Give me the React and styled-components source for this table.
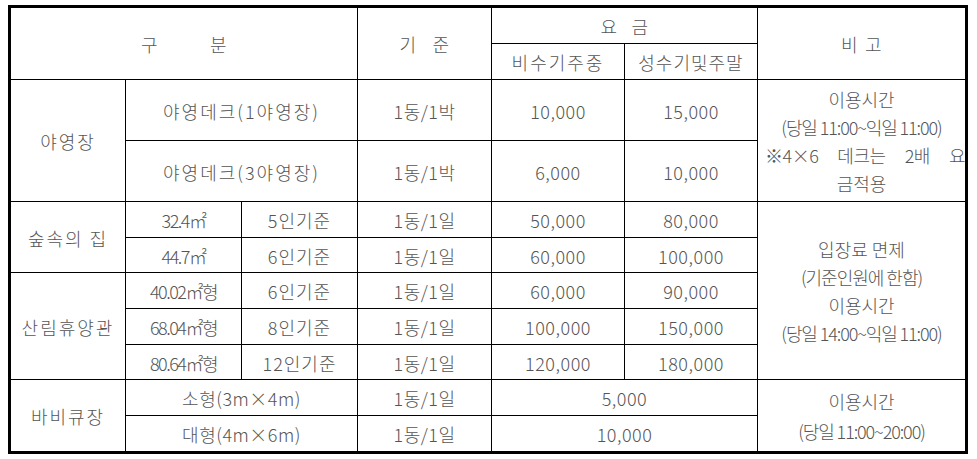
import React from "react";
import styled, { createGlobalStyle } from "styled-components";

const Global = createGlobalStyle`
  html, body { margin: 0; padding: 0; background: #fff; }
  body { font-family: "Noto Sans CJK KR", "Noto Sans", sans-serif; }
`;

const Page = styled.div`
  padding: 5px 0 0 8px;
`;

const Table = styled.div`
  display: grid;
  width: 954px;
  grid-template-columns: 114px 115px 115px 133px 132px 132px 207px;
  grid-template-rows: 35px 35px 60px 60px 35px 34px 35px 35px 34px 35px 35px;
  gap: 1px;
  background: #000;
  border: 3px solid #000;
`;

const Cell = styled.div`
  grid-column: ${(p) => p.$c};
  grid-row: ${(p) => p.$r};
  background: #fff;
  display: flex;
  align-items: center;
  justify-content: center;
  color: #555;
  font-size: 18px;
  font-weight: 300;
  line-height: 1;
  letter-spacing: ${(p) => p.$ls || "0.5px"};
  white-space: nowrap;
  overflow: hidden;
  padding-top: 1px;
`;

const Note = styled.div`
  grid-column: 7;
  grid-row: ${(p) => p.$r};
  background: #fff;
  display: flex;
  flex-direction: column;
  align-items: stretch;
  justify-content: center;
  color: #555;
  font-size: 18px;
  font-weight: 300;
  line-height: ${(p) => p.$lh || "28px"};
  white-space: nowrap;
  overflow: hidden;
`;

const NoteLine = styled.div`
  text-align: center;
  letter-spacing: ${(p) => p.$ls || "0"};
`;

const SpreadLine = styled.div`
  display: flex;
  justify-content: space-between;
  padding: 0 0 0 7px;
  letter-spacing: -0.5px;
`;

const Condensed = styled.span`
  letter-spacing: ${(p) => p.$ls || "-1.5px"};
`;

const Gap = styled.span`
  display: inline-block;
  width: ${(p) => p.$w}px;
`;

const rows = [
  { r: 3, sub: "야영데크(1야영장)", base: "1동/1박", a: "10,000", b: "15,000" },
  { r: 4, sub: "야영데크(3야영장)", base: "1동/1박", a: "6,000", b: "10,000" },
];

const split = [
  { r: 5, area: "32.4㎡", cap: "5인기준", a: "50,000", b: "80,000" },
  { r: 6, area: "44.7㎡", cap: "6인기준", a: "60,000", b: "100,000" },
  { r: 7, area: "40.02㎡형", cap: "6인기준", a: "60,000", b: "90,000" },
  { r: 8, area: "68.04㎡형", cap: "8인기준", a: "100,000", b: "150,000" },
  { r: 9, area: "80.64㎡형", cap: "12인기준", a: "120,000", b: "180,000" },
];

export default function App() {
  return (
    <Page>
      <Global />
      <Table>
        <Cell $c="1 / 4" $r="1 / 3">
          구<Gap $w={52} />분
        </Cell>
        <Cell $c="4" $r="1 / 3">
          기<Gap $w={16} />준
        </Cell>
        <Cell $c="5 / 7" $r="1">
          요<Gap $w={14} />금
        </Cell>
        <Cell $c="5" $r="2" $ls="2px">비수기주중</Cell>
        <Cell $c="6" $r="2" $ls="1px">성수기및주말</Cell>
        <Cell $c="7" $r="1 / 3">
          비<Gap $w={7} />고
        </Cell>

        <Cell $c="1" $r="3 / 5" $ls="2px">야영장</Cell>
        {rows.map((x) => (
          <React.Fragment key={x.r}>
            <Cell $c="2 / 4" $r={x.r} $ls="2px">{x.sub}</Cell>
            <Cell $c="4" $r={x.r}>{x.base}</Cell>
            <Cell $c="5" $r={x.r}>{x.a}</Cell>
            <Cell $c="6" $r={x.r}>{x.b}</Cell>
          </React.Fragment>
        ))}
        <Note $r="3 / 5">
          <NoteLine>이용시간</NoteLine>
          <NoteLine $ls="-1.1px">(당일 11:00~익일 11:00)</NoteLine>
          <SpreadLine>
            <span>※4×6</span>
            <span>데크는</span>
            <span>2배</span>
            <span>요</span>
          </SpreadLine>
          <NoteLine>금적용</NoteLine>
        </Note>

        <Cell $c="1" $r="5 / 7" $ls="2px">숲속의 집</Cell>
        <Cell $c="1" $r="7 / 10" $ls="2px">산림휴양관</Cell>
        {split.map((x) => (
          <React.Fragment key={x.r}>
            <Cell $c="2" $r={x.r}>
              <Condensed>{x.area}</Condensed>
            </Cell>
            <Cell $c="3" $r={x.r} $ls="1px">{x.cap}</Cell>
            <Cell $c="4" $r={x.r}>1동/1일</Cell>
            <Cell $c="5" $r={x.r}>{x.a}</Cell>
            <Cell $c="6" $r={x.r}>{x.b}</Cell>
          </React.Fragment>
        ))}
        <Note $r="5 / 10">
          <NoteLine>입장료 면제</NoteLine>
          <NoteLine $ls="-1px">(기준인원에 한함)</NoteLine>
          <NoteLine>이용시간</NoteLine>
          <NoteLine $ls="-1.1px">(당일 14:00~익일 11:00)</NoteLine>
        </Note>

        <Cell $c="1" $r="10 / 12" $ls="2px">바비큐장</Cell>
        <Cell $c="2 / 4" $r="10" $ls="0.5px">소형(3m×4m)</Cell>
        <Cell $c="4" $r="10">1동/1일</Cell>
        <Cell $c="5 / 7" $r="10">5,000</Cell>
        <Cell $c="2 / 4" $r="11" $ls="0.5px">대형(4m×6m)</Cell>
        <Cell $c="4" $r="11">1동/1일</Cell>
        <Cell $c="5 / 7" $r="11">10,000</Cell>
        <Note $r="10 / 12" $lh="30px">
          <NoteLine>이용시간</NoteLine>
          <NoteLine $ls="-1.1px">(당일 11:00~20:00)</NoteLine>
        </Note>
      </Table>
    </Page>
  );
}
